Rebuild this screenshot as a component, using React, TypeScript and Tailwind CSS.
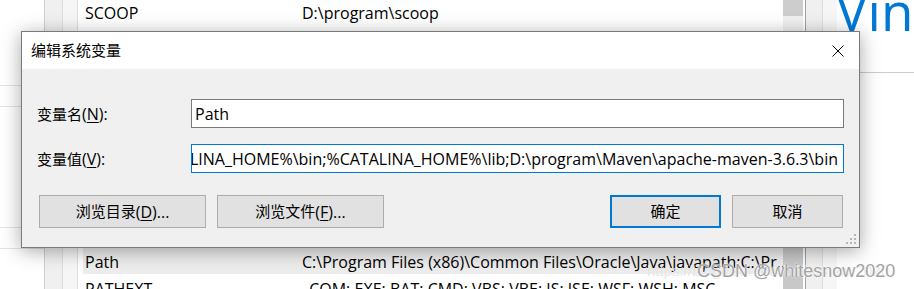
import React from "react";

const F = "font-['Open_Sans','Noto_Sans_CJK_SC',sans-serif]";

function U({ c }: { c: string }) {
  return <span className="underline underline-offset-[2px]">{c}</span>;
}

function Z({ t }: { t: string }) {
  return <span className="text-[15px] font-['Noto_Sans_CJK_SC',sans-serif]">{t}</span>;
}

export default function App() {
  return (
    <div className={`relative w-[914px] h-[289px] overflow-hidden bg-white flex text-[16px] text-black ${F}`}>
      {/* left white strip with faint lines */}
      <div className="w-[44px] shrink-0 flex flex-col">
        <div className="h-[85px] shrink-0" />
        <div className="h-px shrink-0 bg-[#e3e3e3]" />
        <div className="h-[20px] shrink-0" />
        <div className="h-px shrink-0 bg-[#e3e3e3]" />
        <div className="h-[120px] shrink-0" />
        <div className="h-px shrink-0 bg-[#e3e3e3]" />
        <div className="h-[20px] shrink-0" />
        <div className="h-px shrink-0 bg-[#e3e3e3]" />
      </div>
      <div className="w-[18px] shrink-0 border-l border-[#cfcfcf] bg-[#f0f0f0]" />
      <div className="w-[15px] shrink-0 border-l border-[#dedede] bg-[#f6f6f6]" />
      {/* list */}
      <div className="w-[706px] shrink-0 border-l border-[#dedede] flex flex-col pl-[5px] overflow-hidden">
        <div className="h-[26px] shrink-0 flex items-center pl-[2px] whitespace-nowrap">
          <span className="w-[217px] shrink-0">SCOOP</span>
          <span>D:\program\scoop</span>
        </div>
        <div className="h-[26px] shrink-0 flex items-center pl-[2px] whitespace-nowrap">
          <span className="w-[217px] shrink-0">TEMP</span>
          <span>C:\Users\whitesnow\AppData\Local\Temp</span>
        </div>
        <div className="h-[196px] shrink-0" />
        <div className="h-[26px] shrink-0 flex items-center pl-[2px] pt-[2px] whitespace-nowrap bg-[#ededed] overflow-hidden">
          <span className="w-[217px] shrink-0">Path</span>
          <span>C:\Program Files (x86)\Common Files\Oracle\Java\javapath;C:\Pr...</span>
        </div>
        <div className="h-[26px] shrink-0 flex items-center pl-[2px] pt-[4px] whitespace-nowrap overflow-hidden">
          <span className="w-[220px] shrink-0">PATHEXT</span>
          <span>.COM;.EXE;.BAT;.CMD;.VBS;.VBE;.JS;.JSE;.WSF;.WSH;.MSC</span>
        </div>
      </div>
      {/* scrollbar */}
      <div className="w-[20px] shrink-0 bg-[#f0f0f0] flex flex-col">
        <div className="h-[16px] shrink-0 bg-[#cdcdcd]" />
        <div className="flex-1" />
        <div className="h-[41px] shrink-0 bg-[#c8c8c8]" />
      </div>
      <div className="w-[2px] shrink-0 bg-white" />
      <div className="w-[17px] shrink-0 border-l border-[#a0a0a0] bg-[#f0f0f0]" />
      <div className="w-[15px] shrink-0 border-l border-[#dedede] bg-[#f6f6f6]" />
      <div className="flex-1 flex flex-col overflow-hidden">
        <div className="h-[72px] shrink-0 overflow-hidden">
          <div className="-mt-[16px] -ml-[1px] text-[#0078d7] text-[53px] leading-none font-normal font-['Open_Sans',sans-serif] whitespace-nowrap">
            Vind
          </div>
        </div>
        <div className="h-px shrink-0 bg-[#cccccc]" />
      </div>

      {/* dialog */}
      <div className="absolute left-[21px] top-[31px] w-[839px] h-[217px] border border-[#7a7a7a] bg-[#f0f0f0] shadow-[0_3px_18px_rgba(0,0,0,0.35)] flex flex-col">
        <div className="h-[37px] shrink-0 bg-white flex items-center justify-between pl-[9px] pr-[15px]">
          <Z t="编辑系统变量" />
          <svg width="12" height="12" viewBox="0 0 12 12">
            <path d="M0.5 0.5 L11.5 11.5 M11.5 0.5 L0.5 11.5" stroke="#000" strokeWidth="1" />
          </svg>
        </div>
        <div className="relative flex-1 flex flex-col pt-[30px]">
          <div className="flex items-center pl-[15px] pr-[15px]">
            <span className="w-[154px] shrink-0">
              <Z t="变量名" />(<U c="N" />):
            </span>
            <div className="flex-1 h-[29px] border border-[#7a7a7a] bg-white flex items-center pl-[3px] overflow-hidden whitespace-nowrap">
              Path
            </div>
          </div>
          <div className="flex items-center pl-[15px] pr-[15px] mt-[16px]">
            <span className="w-[154px] shrink-0">
              <Z t="变量值" />(<U c="V" />):
            </span>
            <div className="flex-1 h-[29px] border border-[#0078d7] bg-white flex items-center justify-end pr-[5px] overflow-hidden whitespace-nowrap">
              <span className="shrink-0">
                C:\Windows\System32;%JAVA_HOME%\bin;%CATALINA_HOME%\bin;%CATALINA_HOME%\lib;D:\program\Maven\apache-maven-3.6.3\bin
              </span>
            </div>
          </div>
          <div className="flex items-center pl-[17px] pr-[16px] mt-[22px]">
            <div className="w-[167px] h-[33px] border border-[#adadad] bg-[#e1e1e1] flex items-center justify-center">
              <Z t="浏览目录" />(<U c="D" />)...
            </div>
            <div className="w-[167px] h-[33px] ml-[11px] border border-[#adadad] bg-[#e1e1e1] flex items-center justify-center">
              <Z t="浏览文件" />(<U c="F" />)...
            </div>
            <div className="flex-1" />
            <div className="w-[111px] h-[33px] border-2 border-[#0078d7] bg-[#e1e1e1] flex items-center justify-center">
              <Z t="确定" />
            </div>
            <div className="w-[111px] h-[33px] ml-[11px] border border-[#adadad] bg-[#e1e1e1] flex items-center justify-center">
              <Z t="取消" />
            </div>
          </div>
          <svg className="absolute right-[2px] bottom-[2px]" width="11" height="11" viewBox="0 0 11 11">
            <rect x="8" y="0" width="2" height="2" fill="#b5b5b5" />
            <rect x="4" y="4" width="2" height="2" fill="#b5b5b5" />
            <rect x="8" y="4" width="2" height="2" fill="#b5b5b5" />
            <rect x="0" y="8" width="2" height="2" fill="#b5b5b5" />
            <rect x="4" y="8" width="2" height="2" fill="#b5b5b5" />
            <rect x="8" y="8" width="2" height="2" fill="#b5b5b5" />
          </svg>
        </div>
      </div>

      {/* watermark */}
      <div className="absolute left-[647px] top-[263px] text-[15px] leading-none text-[#e6e6e6] font-['Liberation_Sans',sans-serif] whitespace-nowrap">
        https://blog.csdn.net/whitesnow2020
      </div>
      <div className="absolute left-[697px] top-[262px] text-[18px] leading-none text-[#a3a3a3] font-['Liberation_Sans',sans-serif] whitespace-nowrap [text-shadow:0_0_2px_#fff,0_0_1px_#fff]">
        CSDN @whitesnow2020
      </div>
    </div>
  );
}
